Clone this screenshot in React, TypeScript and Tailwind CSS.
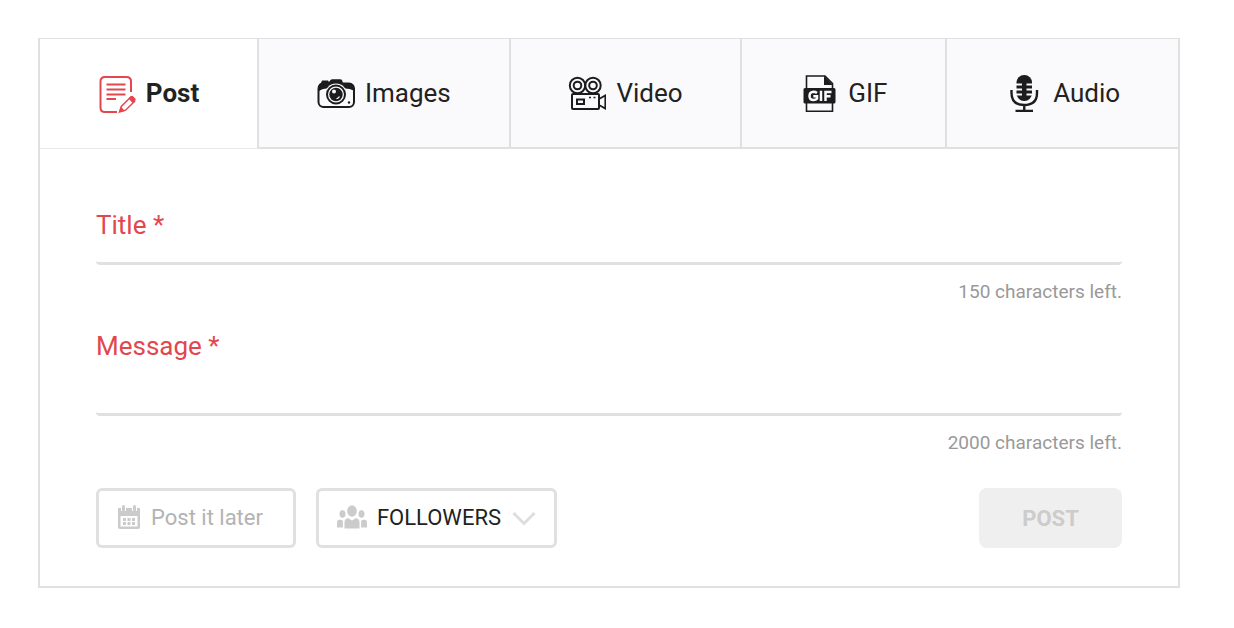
import { useState, type ReactNode } from "react";

const ICON = "h-[38px] w-[38px] shrink-0";

function PostIcon() {
  return (
    <svg className={ICON} viewBox="0 0 38 38" fill="none" stroke="#e2474e" aria-hidden="true">
      <path d="M33 17V6.500Q33 2 28.500 2H7Q2.500 2 2.500 6.500V32.500Q2.500 37 7 37H19" strokeWidth="2" />
      <path d="M8.500 9.500H27.500M8.500 14.500H27.500M8.500 19.500H27.500M8.500 24H18" strokeWidth="2.200" />
      <path d="M21.500 37L23.300 31.500L32.500 22.300L36.500 26.500L27.500 35.200Z" strokeWidth="1.500" />
      <path d="M30.500 23.500L32.800 21.200Q34 20.300 35.300 21.500L37.300 23.500Q38.200 24.800 37 26L34.800 28.200ZM21.200 37.300L22.800 31.800L27 36Z" fill="#e2474e" stroke="none" />
    </svg>
  );
}

function CameraIcon() {
  return (
    <svg className={ICON} viewBox="0 0 38 38" fill="none" stroke="#1c1c1e" aria-hidden="true">
      <path d="M4 9L5 6.500H11L12 8L13.500 6Q14 5.300 15.500 5.300H23Q24.500 5.300 25 6L26 9H33Q36.500 9.500 36.500 13V16.500Q33 14.500 28 14.500H10Q5 14.500 1.500 17.500V13Q1.500 9.500 4 9Z" fill="#1c1c1e" stroke="none" />
      <rect x="1.500" y="9.500" width="35.500" height="23.500" rx="5" strokeWidth="2" />
      <circle cx="19" cy="20.500" r="11" fill="#fafafc" stroke="none" />
      <circle cx="19" cy="20.500" r="9" strokeWidth="2" />
      <circle cx="19" cy="20.500" r="6.700" fill="#1c1c1e" stroke="none" />
      <path d="M22.500 22.500Q21.500 24.500 19.500 24.700" stroke="#fafafc" strokeWidth="1.200" />
      <circle cx="17" cy="17.500" r="2" fill="#fafafc" stroke="none" />
      <circle cx="32" cy="28.500" r="1.200" fill="#1c1c1e" stroke="none" />
    </svg>
  );
}

function VideoIcon() {
  return (
    <svg className={ICON} viewBox="0 0 38 38" fill="none" stroke="#1c1c1e" aria-hidden="true">
      <circle cx="9.500" cy="11.500" r="7.700" strokeWidth="2" />
      <circle cx="9.500" cy="11.500" r="3.800" strokeWidth="2" />
      <circle cx="25" cy="11.500" r="7.700" strokeWidth="2" />
      <circle cx="25" cy="11.500" r="3.800" strokeWidth="2" />
      <rect x="4" y="20" width="27" height="15" rx="1" fill="#fafafc" strokeWidth="2" />
      <rect x="9" y="25.500" width="7" height="4.500" strokeWidth="2" />
      <path d="M21 23.500H23M25.500 23.500H27.500" strokeWidth="1.500" />
      <path d="M31 25L37.300 21.500V34.500L31 31Z" strokeWidth="1.800" />
    </svg>
  );
}

function GifIcon() {
  return (
    <svg className={ICON} viewBox="0 0 38 38" aria-hidden="true">
      <path d="M6.500 15V2H25L32.500 9.500V15M6.500 29V37.200H32.500V29" fill="none" stroke="#1c1c1e" strokeWidth="1.600" />
      <path d="M24 1.500L33 11H24Z" fill="#1c1c1e" />
      <rect x="3.500" y="14" width="32" height="15.500" rx="1.500" fill="#1c1c1e" />
      <path d="M17 19Q15.500 17.800 13.500 17.800Q9.500 18 9.500 22Q9.500 26 13.500 26Q16 26 17 24.800V22.300H13.300M21 16.800V27M25.500 27V18H31.500M25.500 22.300H30.500" fill="none" stroke="#fafafc" strokeWidth="2.500" />
    </svg>
  );
}

function MicIcon() {
  return (
    <svg className={ICON} viewBox="0 0 38 38" aria-hidden="true">
      <rect x="11.500" y="1" width="15.500" height="26" rx="7.500" fill="#1c1c1e" />
      <path d="M11 10.500H17M11 15.500H17M11 20.500H17M21.500 10.500H28M21.500 15.500H28M21.500 20.500H28" stroke="#fafafc" strokeWidth="2" />
      <path d="M6.500 16V19Q6.500 31 19.250 31Q32 31 32 19V16M19.250 31V37M10.500 37H28" fill="none" stroke="#1c1c1e" strokeWidth="2.400" />
    </svg>
  );
}

function CalendarIcon() {
  return (
    <svg className="h-6 w-6 shrink-0" viewBox="0 0 24 24" aria-hidden="true">
      <path d="M1 3H23V22Q23 24 21 24H3Q1 24 1 22Z" fill="#cbcbcb" />
      <path d="M6.500 0V6M17.500 0V6" stroke="#fff" strokeWidth="5" />
      <path d="M6.500 1.500V5M17.500 1.500V5" stroke="#cbcbcb" strokeWidth="3" strokeLinecap="round" />
      <path d="M3.500 11H20.500V21.500H3.500Z" fill="#fff" />
      <path d="M6 14.500H18M6 18.500H18" stroke="#cbcbcb" strokeWidth="3" strokeDasharray="3 1.500" />
    </svg>
  );
}

function PeopleIcon() {
  return (
    <svg className="h-6 w-[30px] shrink-0" viewBox="0 0 30 24" fill="#cbcbcb" aria-hidden="true">
      <ellipse cx="15" cy="6" rx="4.800" ry="5.800" />
      <ellipse cx="5.500" cy="9" rx="3" ry="3.800" />
      <ellipse cx="24.500" cy="9" rx="3" ry="3.800" />
      <path d="M7.500 23.500V17Q7.500 14 11 13L15 15.500L19 13Q22.500 14 22.500 17V23.500Z" />
      <path d="M0 22.500V17.500Q0 15 2.500 14.500L5.800 15.500V22.500ZM30 22.500V17.500Q30 15 27.500 14.500L24.200 15.500V22.500Z" />
    </svg>
  );
}

const tabs: { name: string; icon: ReactNode }[] = [
  { name: "Post", icon: <PostIcon /> },
  { name: "Images", icon: <CameraIcon /> },
  { name: "Video", icon: <VideoIcon /> },
  { name: "GIF", icon: <GifIcon /> },
  { name: "Audio", icon: <MicIcon /> },
];

const LABEL = "pointer-events-none text-[26px] leading-8 text-[#e2474e] [grid-area:1/1]";
const FIELD =
  "w-full resize-none rounded-sm border-b-[3px] border-[#e0e0e0] bg-transparent pt-2 text-[26px] leading-8 text-[#222] outline-none [grid-area:1/1]";
const COUNTER = "mt-[15px] text-right text-[19px] leading-6 text-[#999]";

export default function App() {
  const [active, setActive] = useState("Post");
  const [title, setTitle] = useState("");
  const [message, setMessage] = useState("");

  return (
    <main className="min-h-screen bg-white py-[38px] pr-[54px] pl-[38px] font-['Roboto',sans-serif] text-[#222]">
      <form className="border-2 border-t border-[#e0e0e0]" onSubmit={(e) => e.preventDefault()}>
        <div role="tablist" className="flex">
          {tabs.map(({ name, icon }) => (
            <button
              key={name}
              type="button"
              role="tab"
              aria-selected={active === name}
              onClick={() => setActive(name)}
              className={`flex h-[110px] flex-auto items-center justify-center gap-2.5 border-r-2 border-[#e0e0e0] px-14 text-[26px] last:border-r-0 ${
                active === name ? "border-b border-b-[#e8e8e8] bg-white font-bold" : "border-b-2 bg-[#fafafc]"
              }`}
            >
              {icon}
              {name}
            </button>
          ))}
        </div>

        <div className="px-14 pt-[60px] pb-[38px]">
          <div className="grid">
            <label htmlFor="title" className={LABEL}>Title *</label>
            <input id="title" maxLength={150} value={title} onChange={(e) => setTitle(e.target.value)} className={`h-14 ${FIELD}`} />
          </div>
          <p className={COUNTER}>{150 - title.length} characters left.</p>

          <div className="mt-[26px] grid">
            <label htmlFor="message" className={LABEL}>Message *</label>
            <textarea id="message" maxLength={2000} value={message} onChange={(e) => setMessage(e.target.value)} className={`h-[86px] ${FIELD}`} />
          </div>
          <p className={COUNTER}>{2000 - message.length} characters left.</p>

          <div className="mt-[33px] flex items-center gap-5">
            <button type="button" className="flex h-[60px] items-center gap-2.5 rounded-md border-[3px] border-[#e0e0e0] pr-[30px] pb-0.5 pl-[18px] text-[22px] text-[#b3b3b3]">
              <CalendarIcon />
              Post it later
            </button>
            <div className="flex h-[60px] items-center gap-2.5 rounded-md border-[3px] border-[#e0e0e0] px-[18px] pb-0.5">
              <PeopleIcon />
              <select aria-label="Audience" className="appearance-none bg-transparent text-[22px] outline-none">
                <option>FOLLOWERS</option>
                <option>PUBLIC</option>
              </select>
              <svg className="h-5 w-6 shrink-0" viewBox="0 0 24 20" fill="none" aria-hidden="true">
                <path d="M1.500 6L12 16.500L22.500 6" stroke="#dedede" strokeWidth="3" />
              </svg>
            </div>
            <button type="submit" disabled className="ml-auto h-[60px] w-[143px] rounded-lg bg-[#efefef] text-[22px] font-bold text-[#cccccc]">
              POST
            </button>
          </div>
        </div>
      </form>
    </main>
  );
}
